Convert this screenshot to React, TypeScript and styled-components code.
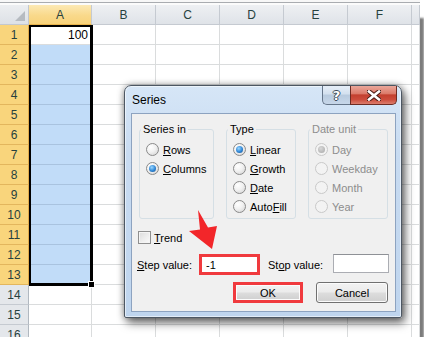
import React from 'react';
import styled, { createGlobalStyle, css } from 'styled-components';

const GlobalStyle = createGlobalStyle`
  html, body {
    margin: 0;
    padding: 0;
    background: #fff;
    overflow: hidden;
  }
  body {
    font-family: "Liberation Sans", Arial, sans-serif;
  }
`;

const COLS = ['A', 'B', 'C', 'D', 'E', 'F', 'G'];
const ROW_COUNT = 16;
const SEL_LAST = 13;

const Screen = styled.div`
  position: relative;
  width: 420px;
  height: 337px;
  box-shadow: 11px 11px 2px -7px #7c7c7c;
`;

const Clip = styled.div`
  width: 100%;
  height: 100%;
  overflow: hidden;
`;

const Sheet = styled.div`
  display: grid;
  grid-template-columns: 29px 63px repeat(5, 64px) 1fr;
  grid-template-rows: 5px 20px repeat(${ROW_COUNT}, 20px);
  font-size: 12px;
  color: #000;
`;

const TopStrip = styled.div`
  grid-column: 1 / -1;
  grid-row: 1;
  background: linear-gradient(#f7f7f7 0 2px, #a9acb0 2px 3px, #fbfbfb 3px);
`;

const headBase = css`
  box-sizing: border-box;
  display: flex;
  align-items: center;
  justify-content: center;
  color: #27413e;
  font-size: 12px;
`;

const Corner = styled.div`
  ${headBase};
  grid-column: 1;
  grid-row: 2;
  position: relative;
  background: linear-gradient(#eceef1, #dde1e6);
  border-right: 1px solid #c3c8cf;
  border-bottom: 1px solid #c3c8cf;
  &::after {
    content: '';
    position: absolute;
    right: 3px;
    bottom: 3px;
    border-style: solid;
    border-width: 0 0 10px 10px;
    border-color: transparent transparent #b6bbc1 transparent;
  }
`;

const ColHead = styled.div<{ $col: number; $selected?: boolean }>`
  ${headBase};
  grid-column: ${(p) => p.$col + 1};
  grid-row: 2;
  border-right: 1px solid #c5cad1;
  border-bottom: 1px solid ${(p) => (p.$selected ? '#e9b44c' : '#c5cad1')};
  background: ${(p) =>
    p.$selected
      ? 'linear-gradient(#fce9b4, #f9d98b 55%, #f8d27a)'
      : 'linear-gradient(#eef0f3, #dfe3e8)'};
`;

const RowHead = styled.div<{ $row: number; $selected?: boolean }>`
  ${headBase};
  grid-column: 1;
  grid-row: ${(p) => p.$row + 2};
  border-bottom: 1px solid ${(p) => (p.$selected ? '#e3b65d' : '#c5cad1')};
  border-right: 1px solid ${(p) => (p.$selected ? '#e0a94a' : '#b1b8c0')};
  background: ${(p) => (p.$selected ? '#f9d57c' : '#e4e7eb')};
`;

const Cell = styled.div<{ $row: number; $col: number; $selected?: boolean }>`
  box-sizing: border-box;
  grid-column: ${(p) => p.$col + 1};
  grid-row: ${(p) => p.$row + 2};
  display: flex;
  align-items: center;
  justify-content: flex-end;
  padding-right: 3px;
  border-right: 1px solid ${(p) => (p.$selected ? '#a9c3df' : '#dadcdd')};
  border-bottom: 1px solid ${(p) => (p.$selected ? '#a9c3df' : '#dadcdd')};
  background: ${(p) => (p.$selected ? '#c1dcf8' : '#fff')};
`;

const SelectionFrame = styled.div`
  grid-column: 2;
  grid-row: 3 / ${SEL_LAST + 3};
  position: relative;
  margin: 0 -1px -1px 0;
  border: 2px solid #000;
  border-right-width: 3px;
  border-bottom-width: 3px;
  pointer-events: none;
`;

const FillHandle = styled.span`
  position: absolute;
  right: -5px;
  bottom: -5px;
  width: 5px;
  height: 5px;
  background: #000;
  border: 1px solid #fff;
`;

const Dialog = styled.div`
  position: absolute;
  left: 124px;
  top: 85px;
  width: 278px;
  height: 233px;
  box-sizing: border-box;
  display: flex;
  flex-direction: column;
  padding: 0 5px 5px 6px;
  border: 1px solid #4d5763;
  border-radius: 7px 7px 2px 2px;
  background: linear-gradient(180deg, #d6e6f7 0%, #c8dbf1 30%, #bfd5ee 100%);
  box-shadow: inset 0 0 0 1px rgba(255, 255, 255, 0.55), 3px 5px 10px rgba(0, 0, 0, 0.55),
    0 0 7px rgba(0, 0, 0, 0.35);
  font-family: "Liberation Sans", Arial, sans-serif;
  font-size: 11px;
  color: #000;
`;

const TitleBar = styled.div`
  height: 27px;
  display: flex;
  justify-content: space-between;
  align-items: flex-start;
`;

const Title = styled.span`
  padding: 7px 0 0 1px;
  font-size: 12px;
  line-height: 14px;
`;

const CaptionGroup = styled.div`
  display: flex;
  margin-right: -1px;
`;

const CaptionButton = styled.div<{ $kind: 'help' | 'close' }>`
  box-sizing: border-box;
  height: 19px;
  display: flex;
  align-items: center;
  justify-content: center;
  border: 1px solid ${(p) => (p.$kind === 'close' ? '#6d2b22' : '#66768a')};
  border-top: none;
  ${(p) =>
    p.$kind === 'close'
      ? css`
          width: 47px;
          border-radius: 0 0 5px 0;
          background: linear-gradient(#eaa79a 0%, #dc7b6b 42%, #c3402f 50%, #cc4c3c 75%, #dc7d6c 100%);
        `
      : css`
          width: 28px;
          border-right: none;
          border-radius: 0 0 0 5px;
          background: linear-gradient(#e6eef8 0%, #d3e0ee 45%, #b8cade 50%, #c7d7e9 100%);
        `}
`;

const HelpMark = styled.span`
  font-family: "DejaVu Sans", sans-serif;
  font-weight: bold;
  font-size: 13px;
  line-height: 13px;
  color: #fff;
  text-shadow: -1px 0 #3d4a58, 1px 0 #3d4a58, 0 -1px #3d4a58, 0 1px #3d4a58;
`;

const Client = styled.div`
  flex: 1;
  box-sizing: border-box;
  display: flex;
  flex-direction: column;
  padding: 9px 7px 0 7px;
  border: 1px solid #8da3c0;
  background: #f0f0f0;
`;

const GroupRow = styled.div`
  display: flex;
  gap: 12px;
  height: 96px;
`;

const Group = styled.fieldset<{ $width: number; $disabled?: boolean }>`
  box-sizing: border-box;
  width: ${(p) => p.$width}px;
  height: 96px;
  margin: 0;
  padding: 0;
  border: 1px solid #d5dfe5;
  border-radius: 3px;
  color: ${(p) => (p.$disabled ? '#8d8d8d' : '#000')};
  min-width: 0;
`;

const Legend = styled.legend`
  margin-left: 1px;
  padding: 0 2px;
  font-size: 11px;
  line-height: 13px;
`;

const OptionList = styled.div`
  display: flex;
  flex-direction: column;
  padding: 4px 0 0 6px;
`;

const OptionRow = styled.label`
  display: flex;
  align-items: center;
  gap: 4px;
  height: 19px;
  white-space: nowrap;
`;

const Radio = styled.span<{ $checked?: boolean; $disabled?: boolean }>`
  flex: none;
  box-sizing: border-box;
  width: 13px;
  height: 13px;
  border-radius: 50%;
  display: flex;
  align-items: center;
  justify-content: center;
  border: 1px solid ${(p) => (p.$disabled ? '#c9c9c9' : '#8a8a8a')};
  background: ${(p) =>
    p.$disabled
      ? '#f3f3f3'
      : 'radial-gradient(circle at 35% 30%, #ffffff 0%, #f1f1f1 45%, #d0d0d0 100%)'};
  &::after {
    content: '';
    display: ${(p) => (p.$checked ? 'block' : 'none')};
    width: 7px;
    height: 7px;
    border-radius: 50%;
    background: ${(p) =>
      p.$disabled
        ? 'radial-gradient(circle at 40% 35%, #d8d8d8 0%, #a7a7a7 100%)'
        : 'radial-gradient(circle at 40% 35%, #9bd8ff 0%, #2f86d6 55%, #174c86 100%)'};
  }
`;

const TrendRow = styled.label`
  display: flex;
  align-items: center;
  gap: 3px;
  height: 13px;
  margin: 12px 0 0 -1px;
`;

const Check = styled.span`
  flex: none;
  box-sizing: border-box;
  width: 13px;
  height: 13px;
  border: 1px solid #8f8f8f;
  background: linear-gradient(135deg, #dcdcdc, #fbfbfb);
  box-shadow: inset 0 0 0 1px #f4f4f4;
`;

const ValueRow = styled.div`
  display: flex;
  align-items: center;
  height: 21px;
  margin: 10px -1px 0 -2px;
`;

const FieldLabel = styled.span<{ $width: number; $gap?: number }>`
  width: ${(p) => p.$width}px;
  margin-left: ${(p) => p.$gap ?? 0}px;
  white-space: nowrap;
`;

const Highlight = styled.div`
  box-sizing: border-box;
  width: 61px;
  height: 21px;
  border: 3px solid #f03a3e;
  background: #fff;
  display: flex;
  align-items: center;
  padding-left: 4px;
`;

const TextBox = styled.div`
  box-sizing: border-box;
  width: 56px;
  height: 19px;
  margin-top: -2px;
  background: #fff;
  border: 1px solid #abadb3;
  border-top-color: #8e9196;
`;

const ButtonRow = styled.div`
  display: flex;
  justify-content: flex-end;
  gap: 13px;
  margin-top: 7px;
`;

const PushButton = styled.div<{ $width: number; $highlight?: boolean }>`
  box-sizing: border-box;
  width: ${(p) => p.$width}px;
  height: 21px;
  display: flex;
  align-items: center;
  justify-content: center;
  border-radius: ${(p) => (p.$highlight ? '0' : '3px')};
  border: ${(p) => (p.$highlight ? '3px solid #f03a3e' : '1px solid #707070')};
  background: linear-gradient(#f2f2f2 0%, #ebebeb 48%, #dddddd 52%, #cfcfcf 100%);
  box-shadow: inset 0 0 0 1px #fbfbfb;
  font-size: 11px;
`;

const Arrow = styled.svg`
  position: absolute;
  left: 184px;
  top: 206px;
  overflow: visible;
`;

export default function App() {
  const rows = Array.from({ length: ROW_COUNT }, (_, i) => i + 1);
  return (
    <>
      <GlobalStyle />
      <Screen>
        <Clip>
          <Sheet>
            <TopStrip />
            <Corner />
            {COLS.map((c, i) => (
              <ColHead key={c} $col={i + 1} $selected={i === 0}>
                {i < 6 ? c : ''}
              </ColHead>
            ))}
            {rows.map((r) => (
              <React.Fragment key={r}>
                <RowHead $row={r} $selected={r <= SEL_LAST}>
                  {r}
                </RowHead>
                {COLS.map((c, i) => (
                  <Cell key={c} $row={r} $col={i + 1} $selected={i === 0 && r >= 2 && r <= SEL_LAST}>
                    {i === 0 && r === 1 ? '100' : ''}
                  </Cell>
                ))}
              </React.Fragment>
            ))}
            <SelectionFrame>
              <FillHandle />
            </SelectionFrame>
          </Sheet>
        </Clip>

        <Dialog>
          <TitleBar>
            <Title>Series</Title>
            <CaptionGroup>
              <CaptionButton $kind="help">
                <HelpMark>?</HelpMark>
              </CaptionButton>
              <CaptionButton $kind="close">
                <svg width="14" height="11" viewBox="0 0 14 11">
                  <path d="M2 1.5 L12 9.5 M12 1.5 L2 9.5" stroke="#4a1c15" strokeWidth="4.6" strokeLinecap="square" />
                  <path d="M2 1.5 L12 9.5 M12 1.5 L2 9.5" stroke="#fff" strokeWidth="2.6" strokeLinecap="square" />
                </svg>
              </CaptionButton>
            </CaptionGroup>
          </TitleBar>

          <Client>
            <GroupRow>
              <Group $width={75}>
                <Legend>Series in</Legend>
                <OptionList>
                  <OptionRow>
                    <Radio />
                    <span><u>R</u>ows</span>
                  </OptionRow>
                  <OptionRow>
                    <Radio $checked />
                    <span><u>C</u>olumns</span>
                  </OptionRow>
                </OptionList>
              </Group>
              <Group $width={70}>
                <Legend>Type</Legend>
                <OptionList>
                  <OptionRow>
                    <Radio $checked />
                    <span><u>L</u>inear</span>
                  </OptionRow>
                  <OptionRow>
                    <Radio />
                    <span><u>G</u>rowth</span>
                  </OptionRow>
                  <OptionRow>
                    <Radio />
                    <span><u>D</u>ate</span>
                  </OptionRow>
                  <OptionRow>
                    <Radio />
                    <span>Auto<u>F</u>ill</span>
                  </OptionRow>
                </OptionList>
              </Group>
              <Group $width={80} $disabled>
                <Legend>Date unit</Legend>
                <OptionList>
                  <OptionRow>
                    <Radio $checked $disabled />
                    <span>Day</span>
                  </OptionRow>
                  <OptionRow>
                    <Radio $disabled />
                    <span>Weekday</span>
                  </OptionRow>
                  <OptionRow>
                    <Radio $disabled />
                    <span>Month</span>
                  </OptionRow>
                  <OptionRow>
                    <Radio $disabled />
                    <span>Year</span>
                  </OptionRow>
                </OptionList>
              </Group>
            </GroupRow>

            <TrendRow>
              <Check />
              <span><u>T</u>rend</span>
            </TrendRow>

            <ValueRow>
              <FieldLabel $width={62}><u>S</u>tep value:</FieldLabel>
              <Highlight>-1</Highlight>
              <FieldLabel $width={65} $gap={8}>St<u>o</u>p value:</FieldLabel>
              <TextBox />
            </ValueRow>

            <ButtonRow>
              <PushButton $width={70} $highlight>OK</PushButton>
              <PushButton $width={72}>Cancel</PushButton>
            </ButtonRow>
          </Client>
        </Dialog>

        <Arrow width="40" height="48" viewBox="0 0 40 48">
          <polygon points="14,4 24,21.5 33,20 28,43 5,25 16,23.5" fill="#f2262a" />
        </Arrow>
      </Screen>
    </>
  );
}
